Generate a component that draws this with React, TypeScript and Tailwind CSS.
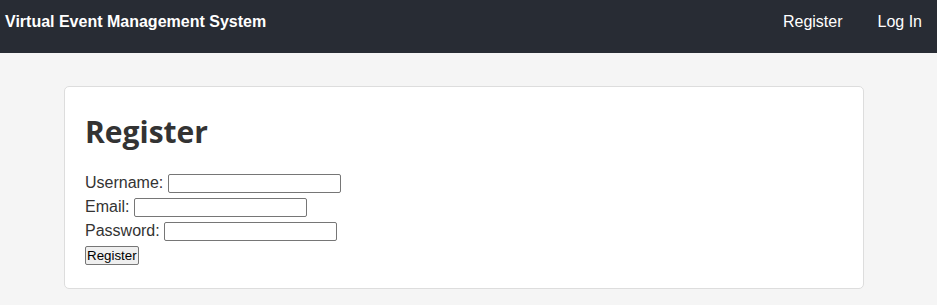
export default function App() {
  return (
    <div className="min-h-[305px] bg-[#f5f5f5] font-['Liberation_Sans',Arial,sans-serif]">
      <nav className="flex h-[53px] items-start justify-between bg-[#282c34] pl-[5px] pr-[15px] pt-[13px] text-white">
        <span className="text-[16px] font-bold leading-[18px]">Virtual Event Management System</span>
        <div className="flex gap-[35px] text-[16px] leading-[18px]">
          <a href="#">Register</a>
          <a href="#">Log In</a>
        </div>
      </nav>

      <main className="pt-[33px]">
        <section className="ml-[64px] w-[800px] rounded-[5px] border border-[#dddddd] bg-white px-[20px] pb-[21px] pt-[26px] text-[#333]">
          <h1 className="mb-[20px] font-['Open_Sans',sans-serif] text-[30px] font-bold leading-[38px] text-[#333]">
            Register
          </h1>

          <form className="flex flex-col text-[16px]" onSubmit={(e) => e.preventDefault()}>
            <div className="flex h-6 items-center gap-[5px]">
              <label>Username:</label>
              <input className="h-[19px] w-[173px] rounded-[2px] border border-[#767676] bg-white px-[2px] text-[13px]" />
            </div>
            <div className="flex h-6 items-center gap-[5px]">
              <label>Email:</label>
              <input className="h-[19px] w-[173px] rounded-[2px] border border-[#767676] bg-white px-[2px] text-[13px]" />
            </div>
            <div className="flex h-6 items-center gap-[4px]">
              <label>Password:</label>
              <input
                type="password"
                className="h-[19px] w-[173px] rounded-[2px] border border-[#767676] bg-white px-[2px] text-[13px]"
              />
            </div>
            <div className="flex h-6 items-center">
              <button className="h-[19px] rounded-[2px] border border-[#767676] bg-[#efefef] px-[1px] text-[13.33px] leading-[15px] text-black">
                Register
              </button>
            </div>
          </form>
        </section>
      </main>
    </div>
  );
}
